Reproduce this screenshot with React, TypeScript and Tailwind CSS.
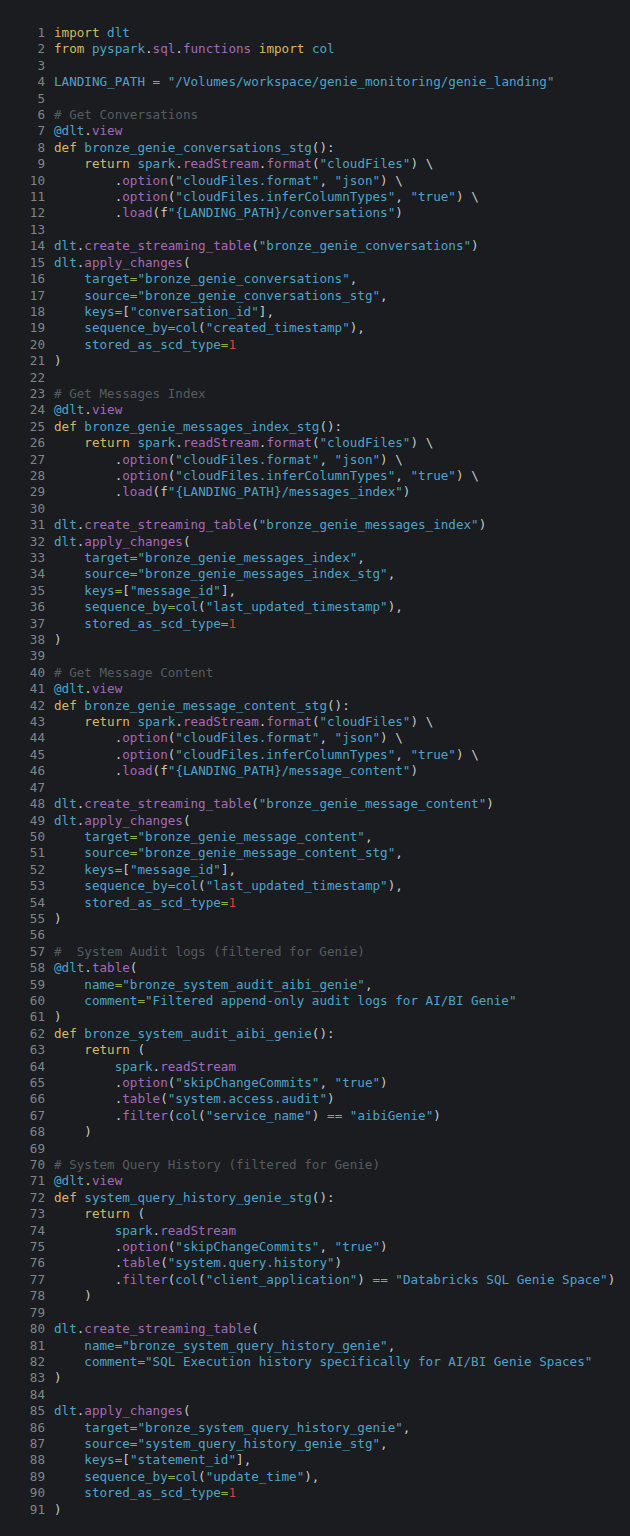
import React from "react";

const CODE = `import dlt
from pyspark.sql.functions import col

LANDING_PATH = "/Volumes/workspace/genie_monitoring/genie_landing"

# Get Conversations
@dlt.view
def bronze_genie_conversations_stg():
    return spark.readStream.format("cloudFiles") \\
        .option("cloudFiles.format", "json") \\
        .option("cloudFiles.inferColumnTypes", "true") \\
        .load(f"{LANDING_PATH}/conversations")

dlt.create_streaming_table("bronze_genie_conversations")
dlt.apply_changes(
    target="bronze_genie_conversations",
    source="bronze_genie_conversations_stg",
    keys=["conversation_id"],
    sequence_by=col("created_timestamp"),
    stored_as_scd_type=1
)

# Get Messages Index
@dlt.view
def bronze_genie_messages_index_stg():
    return spark.readStream.format("cloudFiles") \\
        .option("cloudFiles.format", "json") \\
        .option("cloudFiles.inferColumnTypes", "true") \\
        .load(f"{LANDING_PATH}/messages_index")

dlt.create_streaming_table("bronze_genie_messages_index")
dlt.apply_changes(
    target="bronze_genie_messages_index",
    source="bronze_genie_messages_index_stg",
    keys=["message_id"],
    sequence_by=col("last_updated_timestamp"),
    stored_as_scd_type=1
)

# Get Message Content
@dlt.view
def bronze_genie_message_content_stg():
    return spark.readStream.format("cloudFiles") \\
        .option("cloudFiles.format", "json") \\
        .option("cloudFiles.inferColumnTypes", "true") \\
        .load(f"{LANDING_PATH}/message_content")

dlt.create_streaming_table("bronze_genie_message_content")
dlt.apply_changes(
    target="bronze_genie_message_content",
    source="bronze_genie_message_content_stg",
    keys=["message_id"],
    sequence_by=col("last_updated_timestamp"),
    stored_as_scd_type=1
)

#  System Audit logs (filtered for Genie)
@dlt.table(
    name="bronze_system_audit_aibi_genie",
    comment="Filtered append-only audit logs for AI/BI Genie"
)
def bronze_system_audit_aibi_genie():
    return (
        spark.readStream
        .option("skipChangeCommits", "true")
        .table("system.access.audit")
        .filter(col("service_name") == "aibiGenie")
    )

# System Query History (filtered for Genie)
@dlt.view
def system_query_history_genie_stg():
    return (
        spark.readStream
        .option("skipChangeCommits", "true")
        .table("system.query.history")
        .filter(col("client_application") == "Databricks SQL Genie Space")
    )

dlt.create_streaming_table(
    name="bronze_system_query_history_genie",
    comment="SQL Execution history specifically for AI/BI Genie Spaces"
)

dlt.apply_changes(
    target="bronze_system_query_history_genie",
    source="system_query_history_genie_stg",
    keys=["statement_id"],
    sequence_by=col("update_time"),
    stored_as_scd_type=1
)`;

type Kind = "kw" | "id" | "method" | "str" | "num" | "op" | "punc" | "comment" | "ws";

const CLS: Record<Kind, string> = {
  kw: "text-[#d6b964]",
  id: "text-[#4fa3c9]",
  method: "text-[#a56ab9]",
  str: "text-[#4fa3c9]",
  num: "text-[#d2423d]",
  op: "text-[#8db33c]",
  punc: "text-[#c6c9cc]",
  comment: "text-[#545c62]",
  ws: "",
};

const KEYWORDS = new Set(["import", "from", "def", "return"]);

function tokenize(line: string): { t: string; k: Kind }[] {
  const re = /(#.*$)|(f(?="))|("[^"]*")|(\d+)|(==|=)|([A-Za-z_@][A-Za-z0-9_]*)|(\s+)|(.)/g;
  const out: { t: string; k: Kind }[] = [];
  let m: RegExpExecArray | null;
  let prev = "";
  while ((m = re.exec(line)) !== null) {
    if (m[0] === "") break;
    let k: Kind;
    if (m[1]) k = "comment";
    else if (m[2]) k = "punc";
    else if (m[3]) k = "str";
    else if (m[4]) k = "num";
    else if (m[5]) k = "op";
    else if (m[6]) {
      if (KEYWORDS.has(m[6])) k = "kw";
      else if (prev === ".") k = "method";
      else k = "id";
    } else if (m[7]) k = "ws";
    else k = "punc";
    out.push({ t: m[0], k });
    if (k !== "ws") prev = m[0];
  }
  return out;
}

export default function App() {
  const lines = CODE.split("\n");
  return (
    <div className="min-h-[1536px] w-[630px] bg-[#1a1c1f] pt-[25px] font-['DejaVu_Sans_Mono',monospace] text-[12.6px] leading-[16.4px]">
      {lines.map((line, i) => (
        <div key={i} className="flex whitespace-pre">
          <div className="w-[45px] shrink-0 text-right text-[#7d878b]">{i + 1}</div>
          <div className="pl-[9px]">
            {tokenize(line).map((tok, j) => (
              <span key={j} className={CLS[tok.k]}>
                {tok.t}
              </span>
            ))}
            {line.length === 0 ? " " : null}
          </div>
        </div>
      ))}
    </div>
  );
}
